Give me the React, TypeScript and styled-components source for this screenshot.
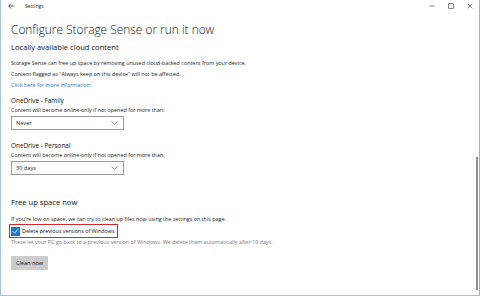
import React from "react";
import styled, { createGlobalStyle } from "styled-components";

const Global = createGlobalStyle`
  html, body { margin: 0; padding: 0; background: #fff; }
  body { font-family: "Open Sans", "Noto Sans", sans-serif; color: #000; }
  * { box-sizing: border-box; }
`;

const Window = styled.div`
  width: 480px;
  height: 296px;
  border-left: 1px solid #a9c3d3;
  border-right: 1px solid #a0b4bf;
  border-bottom: 1px solid #a9c3d3;
  display: flex;
  flex-direction: column;
  overflow: hidden;
  background: #fff;
`;

const TitleBar = styled.div`
  height: 12px;
  display: flex;
  align-items: center;
  flex-shrink: 0;
`;

const BackBtn = styled.div`
  width: 20px;
  display: flex;
  justify-content: center;
`;

const TitleText = styled.div`
  font-size: 5px;
  color: #222;
  margin-left: 4px;
  flex: 1;
`;

const WinCtl = styled.div`
  width: 19px;
  display: flex;
  justify-content: center;
  align-items: center;
`;

const Body = styled.div`
  flex: 1;
  display: flex;
`;

const Content = styled.div`
  flex: 1;
  padding: 8px 0 0 10px;
  display: flex;
  flex-direction: column;
  align-items: flex-start;
`;

const ScrollTrack = styled.div`
  width: 4px;
  display: flex;
  flex-direction: column;
  padding-top: 145px;
  padding-bottom: 5px;
`;

const Thumb = styled.div`
  flex: 1;
  width: 2px;
  margin-left: 1px;
  background: #8d9396;
`;

const H1 = styled.h1`
  margin: 0;
  font-weight: 300;
  font-size: 11.9px;
  line-height: 18px;
  color: #111;
  white-space: nowrap;
`;

const H2 = styled.h2<{ $top: number }>`
  margin: ${(p) => p.$top}px 0 0;
  font-weight: 400;
  font-size: 7.6px;
  line-height: 10px;
  color: #111;
  white-space: nowrap;
`;

const H3 = styled.h3<{ $top: number }>`
  margin: ${(p) => p.$top}px 0 0;
  font-weight: 400;
  font-size: 6.4px;
  line-height: 9px;
  color: #111;
  white-space: nowrap;
`;

const P = styled.p<{ $top: number; $muted?: boolean }>`
  margin: ${(p) => p.$top}px 0 0;
  font-size: 5.4px;
  line-height: 8px;
  color: ${(p) => (p.$muted ? "#7a7a7a" : "#222")};
  white-space: nowrap;
`;

const Link = styled.a<{ $top: number }>`
  margin-top: ${(p) => p.$top}px;
  font-size: 5.4px;
  line-height: 8px;
  color: #2172b0;
  text-decoration: none;
`;

const Select = styled.div<{ $top: number }>`
  margin-top: ${(p) => p.$top}px;
  width: 113px;
  height: 14px;
  border: 1px solid #9a9a9a;
  display: flex;
  align-items: center;
  justify-content: space-between;
  padding: 0 5px 0 4px;
  font-size: 5.6px;
  color: #222;
`;

const CheckRow = styled.div`
  margin-top: 1px;
  margin-left: -2px;
  width: 109px;
  height: 14px;
  border: 1.5px solid #d8262f;
  display: flex;
  align-items: center;
  gap: 2px;
  padding-left: 1px;
`;

const Box = styled.div`
  width: 9px;
  height: 9px;
  background: #1976d2;
  display: flex;
  align-items: center;
  justify-content: center;
`;

const CheckLabel = styled.span`
  font-size: 5.4px;
  color: #111;
  white-space: nowrap;
`;

const Button = styled.div`
  margin-top: 10px;
  width: 37px;
  height: 14px;
  background: #cccccc;
  font-size: 5.6px;
  color: #111;
  display: flex;
  align-items: center;
  justify-content: center;
`;

const Chevron = () => (
  <svg width="7" height="4" viewBox="0 0 7 4">
    <path d="M0.5 0.5 L3.5 3.3 L6.5 0.5" fill="none" stroke="#666" strokeWidth="0.7" />
  </svg>
);

export default function App() {
  return (
    <>
      <Global />
      <Window>
        <TitleBar>
          <BackBtn>
            <svg width="7" height="6" viewBox="0 0 7 6">
              <path d="M3 0.5 L0.7 3 L3 5.5 M0.7 3 H6.5" fill="none" stroke="#333" strokeWidth="0.8" />
            </svg>
          </BackBtn>
          <TitleText>Settings</TitleText>
          <WinCtl>
            <svg width="6" height="6" viewBox="0 0 6 6">
              <path d="M0.5 3 H5.5" stroke="#444" strokeWidth="0.7" />
            </svg>
          </WinCtl>
          <WinCtl>
            <svg width="6" height="6" viewBox="0 0 6 6">
              <rect x="0.7" y="0.7" width="4.6" height="4.6" fill="none" stroke="#444" strokeWidth="0.7" />
            </svg>
          </WinCtl>
          <WinCtl>
            <svg width="6" height="6" viewBox="0 0 6 6">
              <path d="M0.7 0.7 L5.3 5.3 M5.3 0.7 L0.7 5.3" stroke="#444" strokeWidth="0.7" />
            </svg>
          </WinCtl>
        </TitleBar>
        <Body>
          <Content>
            <H1>Configure Storage Sense or run it now</H1>
            <H2 $top={4}>Locally available cloud content</H2>
            <P $top={7}>Storage Sense can free up space by removing unused cloud-backed content from your device.</P>
            <P $top={3}>Content flagged as "Always keep on this device" will not be affected.</P>
            <Link $top={3}>Click here for more information</Link>
            <H3 $top={7}>OneDrive - Family</H3>
            <P $top={1}>Content will become online-only if not opened for more than:</P>
            <Select $top={2}>
              <span>Never</span>
              <Chevron />
            </Select>
            <H3 $top={11}>OneDrive - Personal</H3>
            <P $top={1}>Content will become online-only if not opened for more than:</P>
            <Select $top={2}>
              <span>30 days</span>
              <Chevron />
            </Select>
            <H2 $top={22}>Free up space now</H2>
            <P $top={8}>If you're low on space, we can try to clean up files now using the settings on this page.</P>
            <CheckRow>
              <Box>
                <svg width="7" height="6" viewBox="0 0 7 6">
                  <path d="M0.6 3.1 L2.6 5.1 L6.4 0.8" fill="none" stroke="#fff" strokeWidth="0.9" />
                </svg>
              </Box>
              <CheckLabel>Delete previous versions of Windows</CheckLabel>
            </CheckRow>
            <P $top={0} $muted>These let your PC go back to a previous version of Windows. We delete them automatically after 10 days.</P>
            <Button>Clean now</Button>
          </Content>
          <ScrollTrack>
            <Thumb />
          </ScrollTrack>
        </Body>
      </Window>
    </>
  );
}
